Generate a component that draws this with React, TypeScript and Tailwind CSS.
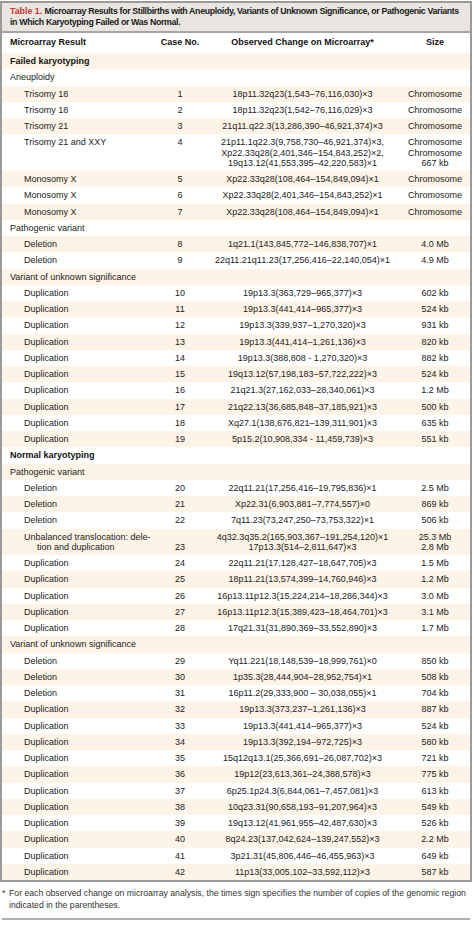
import React from 'react';

type Row =
  | { kind: 'section'; label: string }
  | { kind: 'sub'; label: string }
  | { kind: 'item'; label: string; caseNo: string; change: string[]; size: string[]; labelLines?: string[]; caseAlign?: 'top' | 'bottom' };

const dup = (caseNo: string, change: string, size: string): Row => ({ kind: 'item', label: 'Duplication', caseNo, change: [change], size: [size] });
const del = (caseNo: string, change: string, size: string): Row => ({ kind: 'item', label: 'Deletion', caseNo, change: [change], size: [size] });

const rows: Row[] = [
  { kind: 'section', label: 'Failed karyotyping' },
  { kind: 'sub', label: 'Aneuploidy' },
  { kind: 'item', label: 'Trisomy 18', caseNo: '1', change: ['18p11.32q23(1,543–76,116,030)×3'], size: ['Chromosome'] },
  { kind: 'item', label: 'Trisomy 18', caseNo: '2', change: ['18p11.32q23(1,542–76,116,029)×3'], size: ['Chromosome'] },
  { kind: 'item', label: 'Trisomy 21', caseNo: '3', change: ['21q11.q22.3(13,286,390–46,921,374)×3'], size: ['Chromosome'] },
  {
    kind: 'item',
    label: 'Trisomy 21 and XXY',
    caseNo: '4',
    caseAlign: 'top',
    change: ['21p11.1q22.3(9,758,730–46,921,374)×3,', 'Xp22.33q28(2,401,346–154,843,252)×2,', '19q13.12(41,553,395–42,220,583)×1'],
    size: ['Chromosome', 'Chromosome', '667 kb'],
  },
  { kind: 'item', label: 'Monosomy X', caseNo: '5', change: ['Xp22.33q28(108,464–154,849,094)×1'], size: ['Chromosome'] },
  { kind: 'item', label: 'Monosomy X', caseNo: '6', change: ['Xp22.33q28(2,401,346–154,843,252)×1'], size: ['Chromosome'] },
  { kind: 'item', label: 'Monosomy X', caseNo: '7', change: ['Xp22.33q28(108,464–154,849,094)×1'], size: ['Chromosome'] },
  { kind: 'sub', label: 'Pathogenic variant' },
  del('8', '1q21.1(143,845,772–146,838,707)×1', '4.0 Mb'),
  del('9', '22q11.21q11.23(17,256,416–22,140,054)×1', '4.9 Mb'),
  { kind: 'sub', label: 'Variant of unknown significance' },
  dup('10', '19p13.3(363,729–965,377)×3', '602 kb'),
  dup('11', '19p13.3(441,414–965,377)×3', '524 kb'),
  dup('12', '19p13.3(339,937–1,270,320)×3', '931 kb'),
  dup('13', '19p13.3(441,414–1,261,136)×3', '820 kb'),
  dup('14', '19p13.3(388,808 - 1,270,320)×3', '882 kb'),
  dup('15', '19q13.12(57,198,183–57,722,222)×3', '524 kb'),
  dup('16', '21q21.3(27,162,033–28,340,061)×3', '1.2 Mb'),
  dup('17', '21q22.13(36,685,848–37,185,921)×3', '500 kb'),
  dup('18', 'Xq27.1(138,676,821–139,311,901)×3', '635 kb'),
  dup('19', '5p15.2(10,908,334 - 11,459,739)×3', '551 kb'),
  { kind: 'section', label: 'Normal karyotyping' },
  { kind: 'sub', label: 'Pathogenic variant' },
  del('20', '22q11.21(17,256,416–19,795,836)×1', '2.5 Mb'),
  del('21', 'Xp22.31(6,903,881–7,774,557)×0', '869 kb'),
  del('22', '7q11.23(73,247,250–73,753,322)×1', '506 kb'),
  {
    kind: 'item',
    label: '',
    labelLines: ['Unbalanced translocation: dele-', 'tion and duplication'],
    caseNo: '23',
    caseAlign: 'bottom',
    change: ['4q32.3q35.2(165,903,367–191,254,120)×1', '17p13.3(514–2,811,647)×3'],
    size: ['25.3 Mb', '2.8 Mb'],
  },
  dup('24', '22q11.21(17,128,427–18,647,705)×3', '1.5 Mb'),
  dup('25', '18p11.21(13,574,399–14,760,946)×3', '1.2 Mb'),
  dup('26', '16p13.11p12.3(15,224,214–18,286,344)×3', '3.0 Mb'),
  dup('27', '16p13.11p12.3(15,389,423–18,464,701)×3', '3.1 Mb'),
  dup('28', '17q21.31(31,890,369–33,552,890)×3', '1.7 Mb'),
  { kind: 'sub', label: 'Variant of unknown significance' },
  del('29', 'Yq11.221(18,148,539–18,999,761)×0', '850 kb'),
  del('30', '1p35.3(28,444,904–28,952,754)×1', '508 kb'),
  del('31', '16p11.2(29,333,900 – 30,038,055)×1', '704 kb'),
  dup('32', '19p13.3(373,237–1,261,136)×3', '887 kb'),
  dup('33', '19p13.3(441,414–965,377)×3', '524 kb'),
  dup('34', '19p13.3(392,194–972,725)×3', '580 kb'),
  dup('35', '15q12q13.1(25,366,691–26,087,702)×3', '721 kb'),
  dup('36', '19p12(23,613,361–24,388,578)×3', '775 kb'),
  dup('37', '6p25.1p24.3(6,844,061–7,457,081)×3', '613 kb'),
  dup('38', '10q23.31(90,658,193–91,207,964)×3', '549 kb'),
  dup('39', '19q13.12(41,961,955–42,487,630)×3', '526 kb'),
  dup('40', '8q24.23(137,042,624–139,247,552)×3', '2.2 Mb'),
  dup('41', '3p21.31(45,806,446–46,455,963)×3', '649 kb'),
  dup('42', '11p13(33,005,102–33,592,112)×3', '587 kb'),
];

const grid = 'grid grid-cols-[153px_50px_195px_1fr]';

function TableRow({ row, shaded }: { row: Row; shaded: boolean }) {
  const bg = shaded ? 'bg-[#fdf3e6]' : 'bg-white';
  if (row.kind === 'section') {
    return <div className={`${bg} h-[16.25px] leading-[16.25px] pl-[8px] font-bold text-[#111]`}>{row.label}</div>;
  }
  if (row.kind === 'sub') {
    return <div className={`${bg} h-[16.25px] leading-[16.25px] pl-[8px]`}>{row.label}</div>;
  }
  if (row.change.length === 1) {
    return (
      <div className={`${grid} ${bg} h-[16.25px] leading-[16.25px]`}>
        <div className="pl-[22px]">{row.label}</div>
        <div className="text-center">{row.caseNo}</div>
        <div className="text-center whitespace-nowrap">{row.change[0]}</div>
        <div className="text-center">{row.size[0]}</div>
      </div>
    );
  }
  const labels = row.labelLines ?? [row.label];
  return (
    <div className={`${grid} ${bg} py-[3px] leading-[10.3px]`}>
      <div className="pl-[22px] flex flex-col">
        {labels.map((l, i) => (
          <span key={i} className={i > 0 ? 'pl-[13px]' : ''}>{l}</span>
        ))}
      </div>
      <div className={`text-center flex flex-col ${row.caseAlign === 'bottom' ? 'justify-end' : 'justify-start'}`}>
        <span>{row.caseNo}</span>
      </div>
      <div className="text-center flex flex-col whitespace-nowrap">
        {row.change.map((c, i) => (
          <span key={i}>{c}</span>
        ))}
      </div>
      <div className="text-center flex flex-col">
        {row.size.map((s, i) => (
          <span key={i}>{s}</span>
        ))}
      </div>
    </div>
  );
}

export default function App() {
  return (
    <div className="w-[474px] h-[926px] bg-white text-[9px] text-[#222]" style={{ fontFamily: '"Liberation Sans", Arial, sans-serif' }}>
      <div className="pt-[1px]">
        <div className="w-[472px] border-2 border-[#9a9a9a]">
          {/* Title */}
          <div className="bg-[#e9e6e2] border-b-2 border-[#a5a5a5] pl-[8px] pr-[2px] pt-[3px] pb-[3px] text-[8.8px] leading-[11px] tracking-[-0.35px] font-bold text-[#1a1a1a]">
            <span className="text-[#c0392b] tracking-normal">Table 1. </span>
            <span>Microarray Results for Stillbirths with Aneuploidy, Variants of Unknown Significance, or Pathogenic Variants in Which Karyotyping Failed or Was Normal.</span>
          </div>
          {/* Header */}
          <div className={`${grid} h-[20px] items-center font-bold text-[#111]`}>
            <div className="pl-[8px]">Microarray Result</div>
            <div className="text-center">Case No.</div>
            <div className="text-center">Observed Change on Microarray*</div>
            <div className="text-center">Size</div>
          </div>
          {rows.map((r, i) => (
            <TableRow key={i} row={r} shaded={i % 2 === 0} />
          ))}
        </div>
      </div>
      {/* Footnote */}
      <div className="mt-[6px] pl-[2px] pr-[2px] text-[8.7px] leading-[11.5px] text-[#333]">
        <div className="flex">
          <span className="w-[7px] shrink-0">*</span>
          <span>For each observed change on microarray analysis, the times sign specifies the number of copies of the genomic region indicated in the parentheses.</span>
        </div>
      </div>
      <div className="mt-[7px] ml-[2px] w-[468px] h-[2px] bg-[#b0b0b0]" />
    </div>
  );
}
